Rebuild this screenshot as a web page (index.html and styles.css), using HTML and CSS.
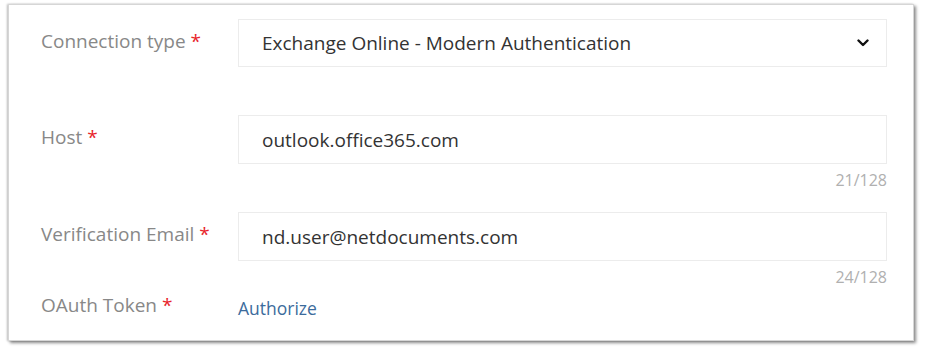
FILE: index.html
```html
<!DOCTYPE html>
<html lang="en">
<head>
  <meta charset="UTF-8">
  <title>Connection settings</title>
  <link rel="stylesheet" href="styles.css">
</head>
<body>
  <div class="panel">
    <div class="row">
      <label class="label">Connection type <span class="req">*</span></label>
      <div class="select">
        <span>Exchange Online - Modern Authentication</span>
        <svg class="chevron" width="12" height="8" viewBox="0 0 12 8">
          <path d="M1.5 1.5 L6 6 L10.5 1.5" fill="none" stroke="#111" stroke-width="2.4" stroke-linecap="round" stroke-linejoin="round"/>
        </svg>
      </div>
    </div>

    <div class="row">
      <label class="label">Host <span class="req">*</span></label>
      <div>
        <div class="input">outlook.office365.com</div>
        <div class="counter">21/128</div>
      </div>
    </div>

    <div class="row">
      <label class="label">Verification Email <span class="req">*</span></label>
      <div>
        <div class="input">nd.user@netdocuments.com</div>
        <div class="counter">24/128</div>
      </div>
    </div>

    <div class="row oauth">
      <label class="label">OAuth Token <span class="req">*</span></label>
      <a class="link" href="#">Authorize</a>
    </div>
  </div>
</body>
</html>
```

FILE: styles.css
```css
html, body {
  height: 354px;
}
body {
  margin: 0;
  background: #fff;
  font-family: "Open Sans", sans-serif;
}
.panel {
  margin: 4px 0 0 8px;
  width: 906px;
  height: 337px;
  box-sizing: border-box;
  padding: 14px 26px 0 32px;
  background: #fff;
  border: 1px solid #d6d6d6;
  box-shadow: 2px 2px 3px rgba(0,0,0,0.45), -1px 0 2px rgba(0,0,0,0.25);
}
.row {
  display: grid;
  grid-template-columns: 197px 1fr;
  align-items: start;
}
.label {
  font-size: 19px;
  line-height: 44px;
  color: #888;
}
.req {
  color: #e8242b;
}
.select, .input {
  height: 48px;
  box-sizing: border-box;
  border: 1px solid #ececec;
  padding: 0 23px;
  font-size: 19px;
  color: #333;
  display: flex;
  align-items: center;
}
.select {
  justify-content: space-between;
  padding-right: 17px;
  margin-bottom: 48px;
}
.input {
  height: 49px;
}
.counter {
  margin-top: 6px;
  line-height: 20px;
  font-size: 16px;
  color: #b0b0b0;
  text-align: right;
  margin-bottom: 22px;
}
.row.oauth {
  margin-top: -15px;
}
.oauth .label {
  line-height: 22px;
}
.link {
  font-size: 17.5px;
  line-height: 24px;
  padding-top: 2px;
  color: #3c6b9c;
  text-decoration: none;
}
```
